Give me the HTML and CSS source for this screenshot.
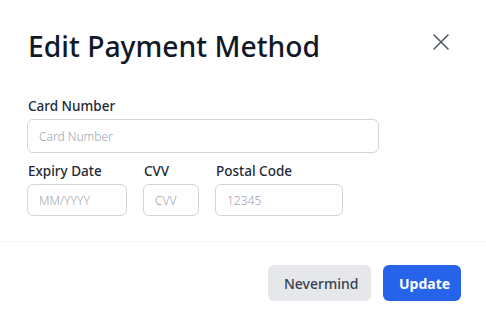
FILE: index.html
```html
<!DOCTYPE html>
<html lang="en">
<head>
<meta charset="utf-8">
<title>Edit Payment Method</title>
<link rel="stylesheet" href="styles.css">
</head>
<body>
<div class="modal">
  <header class="head">
    <h1 class="title">Edit Payment Method</h1>
    <button class="close" aria-label="Close">
      <svg width="16" height="16" viewBox="0 0 16 16" fill="none" stroke="currentColor" stroke-width="1.5" stroke-linecap="round">
        <path d="M1 1L15 15M15 1L1 15"/>
      </svg>
    </button>
  </header>
  <form class="form">
    <div class="field">
      <label class="label">Card Number</label>
      <input class="input input-card" placeholder="Card Number">
    </div>
    <div class="row">
      <div class="field">
        <label class="label">Expiry Date</label>
        <input class="input input-exp" placeholder="MM/YYYY">
      </div>
      <div class="field">
        <label class="label">CVV</label>
        <input class="input input-cvv" placeholder="CVV">
      </div>
      <div class="field">
        <label class="label">Postal Code</label>
        <input class="input input-postal" placeholder="12345">
      </div>
    </div>
  </form>
  <div class="divider"></div>
  <footer class="foot">
    <button class="btn btn-gray">Nevermind</button>
    <button class="btn btn-blue">Update</button>
  </footer>
</div>
</body>
</html>
```
FILE: styles.css
```css
* { box-sizing: border-box; }
html, body { margin: 0; padding: 0; background: #fff; }
body { font-family: "Noto Sans", "Open Sans", sans-serif; color: #111827; }

.modal { width: 486px; height: 320px; background: #fff; }

.head {
  display: flex;
  justify-content: space-between;
  align-items: flex-start;
  padding: 27px 37px 0 28px;
}
.title {
  margin: 0;
  font-size: 28.3px;
  line-height: 38px;
  font-weight: 500;
  color: #111827;
}
.close {
  margin-top: 7px;
  padding: 0;
  border: 0;
  background: none;
  color: #4b5563;
  width: 16px;
  height: 16px;
  display: block;
}
.close svg { display: block; }

.form {
  padding: 31px 28px 0 27px;
  display: flex;
  flex-direction: column;
  gap: 8px;
}
.field { display: flex; flex-direction: column; }
.label {
  font-size: 13.5px;
  line-height: 20px;
  font-weight: 500;
  color: #1f2937;
  margin-bottom: 3px;
  padding-left: 1px;
}
.input {
  font-family: inherit;
  font-size: 12px;
  font-weight: 300;
  color: #111827;
  border: 1px solid #d1d5db;
  border-radius: 6px;
  padding: 0 11px;
  background: #fff;
  outline: none;
}
.input::placeholder { color: #9ca3af; }
.input-card { width: 352px; height: 34px; }
.row { display: flex; gap: 16px; }
.row .input { height: 32px; }
.input-exp { width: 100px; }
.input-cvv { width: 56px; }
.input-postal { width: 128px; }

.divider { height: 1px; background: #f3f4f6; margin-top: 25px; }

.foot {
  display: flex;
  justify-content: flex-end;
  gap: 12px;
  padding: 23px 25px 0 0;
}
.btn {
  font-family: inherit;
  font-size: 14px;
  height: 36px;
  border: 0;
  border-radius: 6px;
  padding: 0 16px;
}
.btn-gray { background: #e5e7eb; color: #374151; font-weight: 500; width: 103px; }
.btn-blue { background: #2563eb; color: #fff; font-weight: 700; width: 78px; }
```
